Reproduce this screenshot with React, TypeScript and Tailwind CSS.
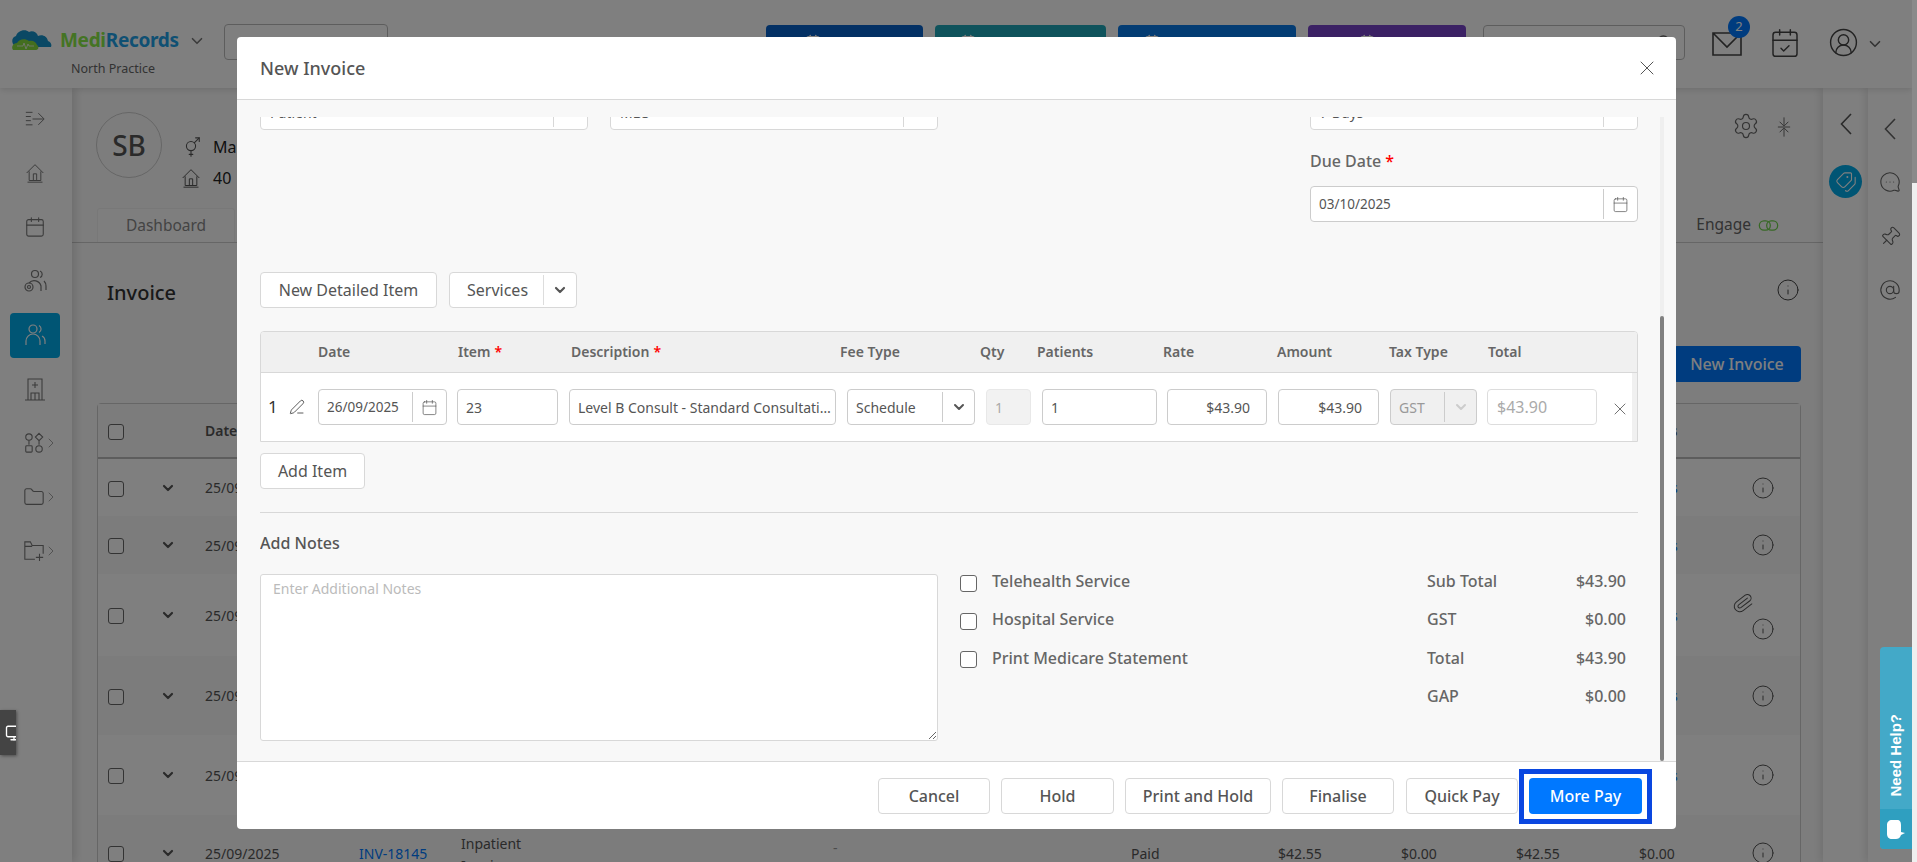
import {
  AtSign,
  Calendar,
  CalendarCheck,
  ChevronDown,
  ChevronRight,
  CircleUserRound,
  Folder,
  Info,
  MessageCircleMore,
  Monitor,
  Paperclip,
  PenLine,
  Pin,
  Search,
  Settings,
  Tags,
  VenusAndMars,
  X,
} from 'lucide-react'

function HomeIcon({ className = 'size-[20px]' }: { className?: string }) {
  return (
    <svg viewBox="0 0 24 24" fill="none" stroke="currentColor" strokeWidth="1.2" className={className}>
      <path d="M2 12 12 2l10 10M5 10v11h14V10M10 21v-8h4v8M3 23h18" />
    </svg>
  )
}

function PeopleIcon({ className = 'size-[24px]' }: { className?: string }) {
  return (
    <svg viewBox="0 0 24 24" fill="none" stroke="currentColor" strokeWidth="1.2" className={className}>
      <circle cx="10" cy="6" r="4" />
      <path d="M16 2.5a4 4 0 0 1 0 7M3 22v-4a7 7 0 0 1 14 0v4M19 13c2 1 3 3 3 5v3" />
    </svg>
  )
}

function CarerIcon() {
  return (
    <svg viewBox="0 0 24 24" fill="none" stroke="currentColor" strokeWidth="1.2" className="size-[24px]">
      <circle cx="12" cy="5" r="3.5" />
      <path d="M17 2a3.5 3.5 0 0 1 0 6.5M6 14a7 7 0 0 1 12 3v5M21 12c1 1 2 3 2 5v4" />
      <circle cx="6" cy="18" r="4" />
      <circle cx="6" cy="18" r="1.5" />
    </svg>
  )
}

function HospitalIcon() {
  return (
    <svg viewBox="0 0 24 24" fill="none" stroke="currentColor" strokeWidth="1.1" className="size-[24px]">
      <path d="M5 23V2h14v21M2 23h20M12 5v6M9 8h6M8 23v-7h8v7M12 16v7" />
    </svg>
  )
}

function ModulesIcon() {
  return (
    <svg viewBox="0 0 24 24" fill="none" stroke="currentColor" strokeWidth="1.2" className="size-[22px]">
      <circle cx="6.5" cy="5.5" r="3.5" />
      <path d="m17.5 1.5 4 4-4 4-4-4zM6.5 9v5M17.5 9.5V14" />
      <rect x="3" y="15" width="7" height="7" rx="1" />
      <circle cx="17.5" cy="18.5" r="3.5" />
    </svg>
  )
}

function FolderAddIcon() {
  return (
    <svg viewBox="0 0 24 24" fill="none" stroke="currentColor" strokeWidth="1.2" className="size-[22px]">
      <path d="M13 21H2V2h6l2 4h12v9M2 7h8M18 15v8M14 19h8" />
    </svg>
  )
}

function MailIcon() {
  return (
    <svg viewBox="0 0 30 24" fill="none" stroke="currentColor" strokeWidth="1.6" className="h-[24px] w-[30px]">
      <path d="M1 1h28v22H1zM1 1l14 14L29 1" />
    </svg>
  )
}

function ExpandIcon() {
  return (
    <svg viewBox="0 0 24 20" fill="none" stroke="currentColor" strokeWidth="1.2" className="h-[18px] w-[20px]">
      <path d="M1 2h8M1 7h6M1 12h6M1 17h8M9 10h13M16 3l7 7-7 7" />
    </svg>
  )
}

function CompressIcon() {
  return (
    <svg viewBox="0 0 16 24" fill="none" stroke="currentColor" strokeWidth="1.1" className="h-[22px] w-[14px]">
      <path d="M8 1v9M3 6l5 5 5-5M1 12h14M8 23v-9M3 18l5-5 5 5" />
    </svg>
  )
}

function LinkIcon() {
  return (
    <svg viewBox="0 0 22 12" fill="none" stroke="#6fd14b" strokeWidth="1.4" className="h-[11px] w-[21px]">
      <rect x="1" y="1" width="12" height="10" rx="5" />
      <rect x="9" y="1" width="12" height="10" rx="5" />
    </svg>
  )
}

function BigChevronLeft() {
  return (
    <svg viewBox="0 0 12 22" fill="none" stroke="currentColor" strokeWidth="1.6" className="h-[22px] w-[12px]">
      <path d="M11 1 1.5 11l9.5 10" />
    </svg>
  )
}

function Logo() {
  return (
    <svg viewBox="0 0 41 22" className="h-[22px] w-[41px]">
      <path d="M3 16c-3-3-2-8 2-9 1-5 9-8 13-4 3-2 8 0 9 4 4-2 9 0 10 5 3 1 4 4 3 6H6c-1 0-2-1-3-2z" fill="#1590c8" />
      <path d="M2 21c-2-3 0-7 4-7 2-4 8-5 12-2 4-1 7 1 8 4 2 1 2 5-1 5z" fill="#86dc3e" />
      <path d="M6 17h6l1-3 2 6 2-5 1 2h5" fill="none" stroke="#f2f2f2" strokeWidth="0.8" />
    </svg>
  )
}

const sideItems = [
  <ExpandIcon key="expand" />,
  <HomeIcon key="home" />,
  <Calendar key="calendar" size={22} strokeWidth={1.2} />,
  <CarerIcon key="carer" />,
]

const sideItemsBottom = [<ModulesIcon key="modules" />, <Folder key="folder" size={22} strokeWidth={1.2} />, <FolderAddIcon key="add" />]

function Sidebar() {
  return (
    <aside className="z-10 flex w-[72px] shrink-0 flex-col bg-white pt-[4px] pl-[10px] text-[#777] shadow-[4px_0_8px_rgba(0,0,0,0.12)]">
      {sideItems.map((icon, i) => (
        <div key={i} className="flex h-[54px] w-[50px] items-center justify-center">
          {icon}
        </div>
      ))}
      <div className="flex h-[54px] w-[50px] items-center justify-center">
        <div className="flex h-[45px] w-[50px] items-center justify-center rounded-[4px] bg-[#00aae8] text-white">
          <PeopleIcon />
        </div>
      </div>
      <div className="flex h-[54px] w-[50px] items-center justify-center">
        <HospitalIcon />
      </div>
      {sideItemsBottom.map((icon, i) => (
        <div key={i} className="relative flex h-[54px] w-[50px] items-center justify-center">
          <span className="-ml-[2px] flex">{icon}</span>
          <ChevronRight size={16} strokeWidth={1} className="absolute left-[33px] text-[#777]" />
        </div>
      ))}
    </aside>
  )
}

function TopBar() {
  return (
    <header className="z-20 flex h-[88px] shrink-0 bg-white shadow-[0_2px_6px_rgba(0,0,0,0.12)]">
      <div className="flex w-[224px] shrink-0 flex-col pl-[11px] pt-[28px]">
        <div className="flex h-[24px] items-center">
          <Logo />
          <span className="ml-[8px] text-[19px] leading-[24px] font-bold tracking-[-0.3px]">
            <span className="text-[#88e848]">Medi</span>
            <span className="text-[#1ea0e6]">Records</span>
          </span>
          <ChevronDown size={18} strokeWidth={2.2} className="ml-[9px] mt-[2px] text-[#777]" />
        </div>
        <p className="mt-[8px] pl-[60px] text-[12.5px] leading-[18px] text-[#666]">North Practice</p>
      </div>
      <div className="mt-[24px] flex h-[36px] w-[164px] justify-end rounded-[4px] border border-[#bbb] pr-[28px] pt-[9px] text-[#666]">
        <ChevronDown size={12} />
      </div>
      <div className="ml-[378px] flex h-[40px] gap-[12px] pt-[25px]">
        <div className="h-[40px] w-[157px] rounded-[4px] bg-[#0661c8] pl-[39px] pt-[9px] text-white">
          <Calendar size={16} />
        </div>
        <div className="h-[40px] w-[171px] rounded-[4px] bg-[#1fa7b8] pl-[25px] pt-[9px] text-white">
          <Calendar size={16} />
        </div>
        <div className="h-[40px] w-[178px] rounded-[4px] bg-[#0678e6] pl-[26px] pt-[9px] text-white">
          <Calendar size={16} />
        </div>
        <div className="h-[40px] w-[158px] rounded-[4px] bg-[#7642c8] pl-[51px] pt-[9px] text-white">
          <Calendar size={16} />
        </div>
      </div>
      <div className="ml-[17px] mt-[25px] flex h-[35px] w-[202px] justify-end rounded-[4px] border border-[#bbb] pr-[12px] pt-[8px] text-[#666]">
        <Search size={16} />
      </div>
      <div className="relative ml-[27px] mt-[32px] h-[24px] text-[#444]">
        <MailIcon />
        <span className="absolute -top-[16px] left-[16px] flex size-[22px] items-center justify-center rounded-full bg-[#0078ff] text-[13px] text-white">
          2
        </span>
      </div>
      <CalendarCheck size={32} strokeWidth={1.1} className="ml-[27px] mt-[27px] text-[#444]" />
      <CircleUserRound size={31} strokeWidth={1.1} className="ml-[27px] mt-[27px] text-[#444]" />
      <ChevronDown size={18} strokeWidth={2.2} className="ml-[7px] mt-[35px] text-[#666]" />
    </header>
  )
}

const rows = [
  { h: 'h-[57px]', stripe: 'bg-white' },
  { h: 'h-[58px]', stripe: 'bg-[#f8f8f8]' },
  { h: 'h-[82px]', stripe: 'bg-white', clip: true },
  { h: 'h-[79px]', stripe: 'bg-[#f8f8f8]' },
  { h: 'h-[80px]', stripe: 'bg-white' },
]

const listCols = 'grid grid-cols-[56px_51px_154px_102px_372px_298px_147px_123px_115px_123px_104px_40px_1fr] items-center text-[14px] text-[#555]'

function ListRow({ h, stripe, clip }: { h: string; stripe: string; clip?: boolean }) {
  return (
    <div className={`${listCols} ${h} ${stripe}`}>
      <div className="pl-[10px] pt-[2px]">
        <span className="block size-[16px] rounded-[3px] border border-[#666] bg-white" />
      </div>
      <ChevronDown size={16} strokeWidth={3.2} className="ml-[6px] text-[#555]" />
      <span>25/09/2025</span>
      <span className="text-[#0078ff]">INV-18144</span>
      <span>Invoice</span>
      <span>-</span>
      <span>Paid</span>
      <span>$42.55</span>
      <span>$0.00</span>
      <span>$42.55</span>
      <span className="-ml-[5px] text-[#0078ff]">Claims</span>
      <div className={`relative flex justify-center ${clip ? 'mt-[28px]' : ''}`}>
        <Info size={24} strokeWidth={1} />
        {clip && <Paperclip size={22} strokeWidth={1.1} className="absolute -left-[11px] -top-[25px] rotate-[8deg]" />}
      </div>
    </div>
  )
}

function InvoiceList() {
  return (
    <div className="ml-[25px] mr-[22px] mt-[21px] rounded-t-[4px] border border-[#ccc] bg-[#fafafa]">
      <div className={`${listCols} h-[55px] border-b-2 border-[#bbb] bg-[#f8f8f8]`}>
        <div className="pl-[10px] pt-[2px]">
          <span className="block size-[16px] rounded-[3px] border border-[#666] bg-white" />
        </div>
        <span />
        <span className="font-semibold">Date</span>
        <span className="col-start-11 -ml-[7px] font-semibold">Claims</span>
      </div>
      {rows.map((r, i) => (
        <ListRow key={i} {...r} />
      ))}
      <div className={`${listCols} h-[76px] bg-[#f8f8f8]`}>
        <div className="pl-[10px] pt-[2px]">
          <span className="block size-[16px] rounded-[3px] border border-[#666] bg-white" />
        </div>
        <ChevronDown size={16} strokeWidth={3.2} className="ml-[6px] text-[#555]" />
        <span>25/09/2025</span>
        <span className="text-[#0078ff]">INV-18145</span>
        <span className="mt-[3px] leading-[22px]">
          Inpatient
          <br />
          Invoice
        </span>
        <span className="-mt-[12px] text-[#999]">-</span>
        <span>Paid</span>
        <span>$42.55</span>
        <span>$0.00</span>
        <span>$42.55</span>
        <span>$0.00</span>
        <div className="flex justify-center">
          <Info size={24} strokeWidth={1} />
        </div>
      </div>
    </div>
  )
}

function MainArea() {
  return (
    <main className="min-w-0 flex-1 bg-[#fbfbfb]">
      <div className="flex h-[120px] pl-[24px] pt-[24px]">
        <div className="flex size-[66px] items-center justify-center rounded-full border border-[#ccc] text-[28px] font-medium text-[#555]">
          SB
        </div>
        <div className="ml-[18px] flex flex-col gap-[9px] pt-[24px] text-[16px] text-[#222]">
          <div className="flex items-center gap-[11px] leading-[22px]">
            <VenusAndMars size={22} strokeWidth={1.2} className="text-[#555]" />
            <span>Male</span>
          </div>
          <div className="flex items-center gap-[12px] pl-[1px] leading-[22px]">
            <HomeIcon className="size-[20px] text-[#555]" />
            <span>40</span>
          </div>
        </div>
        <div className="ml-auto flex gap-[17px] pr-[32px] text-[#666]">
          <Settings size={28} strokeWidth={1} />
          <span className="mt-[4px]">
            <CompressIcon />
          </span>
        </div>
      </div>
      <div className="flex h-[35px] border-b border-[#ccc] pl-[25px] text-[15.5px]">
        <div className="flex w-[138px] items-center justify-center rounded-t-[3px] border-x border-t border-[#f0f0f0] bg-[#fdfdfd] text-[#888]">
          Dashboard
        </div>
        <div className="ml-auto flex items-center gap-[7px] pr-[44px] text-[#666]">
          Engage
          <LinkIcon />
        </div>
      </div>
      <div className="flex h-[103px] pl-[35px] pr-[23px] pt-[35px]">
        <h1 className="text-[20px] leading-[30px] font-medium text-[#333]">Invoice</h1>
        <Info size={24} strokeWidth={1} className="ml-auto text-[#444]" />
      </div>
      <div className="flex justify-end pr-[22px]">
        <div className="flex h-[36px] w-[128px] items-center justify-center rounded-[4px] bg-[#0078ff] text-[16px] font-medium text-white">
          New Invoice
        </div>
      </div>
      <InvoiceList />
    </main>
  )
}

function RightPanels() {
  return (
    <>
      <aside className="z-10 flex w-[45px] shrink-0 flex-col items-center bg-white pt-[25px] text-[#555] shadow-[-3px_0_8px_rgba(0,0,0,0.1)]">
        <BigChevronLeft />
        <div className="mt-[30px] flex size-[33px] items-center justify-center rounded-full bg-[#00aae8] text-white">
          <Tags size={22} strokeWidth={1.2} className="-scale-x-100" />
        </div>
      </aside>
      <aside className="z-10 flex w-[44px] shrink-0 flex-col items-center bg-white pt-[30px] text-[#666] shadow-[-3px_0_8px_rgba(0,0,0,0.1)]">
        <BigChevronLeft />
        <MessageCircleMore size={22} strokeWidth={1.2} className="mt-[31px] -scale-x-100" />
        <Pin size={22} strokeWidth={1.2} className="mt-[33px] rotate-45" />
        <AtSign size={22} strokeWidth={1.2} className="mt-[31px]" />
      </aside>
    </>
  )
}

function Req() {
  return <span className="ml-[4px] text-[#ff0000]">*</span>
}

function SelectStub({ text }: { text: string }) {
  return (
    <div className="relative h-[36px] w-[328px] rounded-[4px] border border-[#d8d8d8] bg-white pl-[9px] text-[14px] leading-[36px] text-[#555]">
      {text}
      <span className="absolute bottom-[2px] right-[33px] top-[2px] w-px bg-[#d8d8d8]" />
    </div>
  )
}

const inputBase = 'flex h-[36px] items-center rounded-[4px] border border-[#ccc] bg-white text-[14px] text-[#555]'

function AddonIcon({ children, w = 'w-[34px]' }: { children: React.ReactNode; w?: string }) {
  return <span className={`ml-auto flex h-[30px] shrink-0 ${w} items-center justify-center border-l border-[#ccc]`}>{children}</span>
}

function LineTable() {
  return (
    <div className="mt-[23px] overflow-hidden rounded-t-[4px] border border-[#d8d8d8] bg-white">
      <div className="grid h-[41px] grid-cols-[57px_140px_113px_269px_140px_57px_126px_114px_112px_99px_1fr] items-center border-b border-[#d8d8d8] bg-[#f0f0f0] pb-[2px] text-[14px] font-semibold text-[#666]">
        <span />
        <span>Date</span>
        <span>
          Item
          <Req />
        </span>
        <span>
          Description
          <Req />
        </span>
        <span>Fee Type</span>
        <span>Qty</span>
        <span>Patients</span>
        <span>Rate</span>
        <span>Amount</span>
        <span>Tax Type</span>
        <span>Total</span>
      </div>
      <div className="flex h-[68px]">
        <div className="grid flex-1 grid-cols-[57px_139px_112px_278px_139px_56px_125px_111px_112px_97px_121px_1fr] items-center">
          <div className="flex items-center pl-[7px] text-[#333]">
            <span className="w-[21px] text-[17px] leading-[20px]">1</span>
            <PenLine size={16} strokeWidth={1.2} />
          </div>
          <div className={`${inputBase} w-[129px] pl-[8px] !text-[13.5px]`}>
            26/09/2025
            <AddonIcon>
              <Calendar size={17} strokeWidth={1} />
            </AddonIcon>
          </div>
          <div className={`${inputBase} w-[101px] pl-[8px]`}>23</div>
          <div className={`${inputBase} w-[267px] pl-[8px] pr-[2px]`}>
            <span className="truncate">Level B Consult - Standard Consultation 20 to 40 minutes</span>
          </div>
          <div className={`${inputBase} w-[128px] pl-[8px]`}>
            Schedule
            <AddonIcon w="w-[32px]">
              <ChevronDown size={16} strokeWidth={3} />
            </AddonIcon>
          </div>
          <div className={`${inputBase} w-[45px] !border-[#e8e8e8] !bg-[#f2f2f2] pl-[8px] !text-[#aaa]`}>1</div>
          <div className={`${inputBase} w-[115px] pl-[8px]`}>1</div>
          <div className={`${inputBase} w-[100px] justify-end pr-[16px]`}>$43.90</div>
          <div className={`${inputBase} w-[101px] justify-end pr-[16px]`}>$43.90</div>
          <div className={`${inputBase} w-[87px] !bg-[#f0f0f0] pl-[8px] !text-[#999]`}>
            GST
            <AddonIcon w="w-[32px]">
              <ChevronDown size={16} strokeWidth={3} className="text-[#ccc]" />
            </AddonIcon>
          </div>
          <div className={`${inputBase} w-[110px] !border-[#ddd] pl-[9px] !text-[16px] !text-[#aaa]`}>$43.90</div>
          <X size={20} strokeWidth={1} className="ml-[2px] mt-[4px] text-[#555]" />
        </div>
        <span className="w-[5px] bg-[#f0f0f0]" />
      </div>
    </div>
  )
}

const optionRows = [
  { option: 'Telehealth Service', label: 'Sub Total', value: '$43.90' },
  { option: 'Hospital Service', label: 'GST', value: '$0.00' },
  { option: 'Print Medicare Statement', label: 'Total', value: '$43.90' },
  { option: '', label: 'GAP', value: '$0.00' },
]

function FormBody() {
  return (
    <div className="flex flex-1 bg-[#f8f8f8] pl-[23px] pt-[17px]">
      <div className="h-[644px] w-[1378px] overflow-hidden">
        <div className="-mt-[23px]">
          <div className="flex gap-[22px]">
            <SelectStub text="Patient" />
            <SelectStub text="MBS" />
            <div className="ml-auto">
              <SelectStub text="7 Days" />
            </div>
          </div>
          <div className="ml-[1050px] mt-[20px] w-[328px] text-[16px] leading-[22px] font-medium text-[#666]">
            Due Date
            <Req />
            <div className={`${inputBase} mt-[14px] pl-[8px] !text-[13.5px] font-normal`}>
              03/10/2025
              <AddonIcon>
                <Calendar size={17} strokeWidth={1} />
              </AddonIcon>
            </div>
          </div>
          <div className="mt-[50px] flex gap-[12px] text-[16px] text-[#555]">
            <div className="flex h-[36px] w-[177px] items-center justify-center rounded-[4px] border border-[#d8d8d8] bg-white">
              New Detailed Item
            </div>
            <div className="flex h-[36px] w-[128px] items-center rounded-[4px] border border-[#d8d8d8] bg-white pl-[17px]">
              Services
              <span className="ml-auto flex h-[30px] w-[33px] items-center justify-center border-l border-[#ddd]">
                <ChevronDown size={16} strokeWidth={3.2} />
              </span>
            </div>
          </div>
          <LineTable />
          <div className="mt-[11px] flex h-[36px] w-[105px] items-center justify-center rounded-[4px] border border-[#d8d8d8] bg-white text-[16px] text-[#555]">
            Add Item
          </div>
          <div className="mt-[23px] border-t border-[#d8d8d8]" />
          <h2 className="mt-[19px] text-[16px] leading-[22px] font-medium text-[#555]">Add Notes</h2>
          <div className="mt-[20px] flex">
            <textarea
              placeholder="Enter Additional Notes"
              className="h-[167px] w-[678px] rounded-[3px] border border-[#d8d8d8] bg-white px-[12px] py-[3px] text-[14px] text-[#555] outline-none placeholder:text-[#bbb]"
            />
            <div className="-mt-[4px] ml-[22px] flex h-fit flex-1 flex-col gap-[16.33px] text-[16px] leading-[22px] font-medium text-[#666]">
              {optionRows.map((r) => (
                <div key={r.label} className="flex h-[22px] items-center">
                  <div className="flex w-[467px] items-center">
                    {r.option && (
                      <>
                        <span className="mr-[15px] mt-[4px] block size-[17px] rounded-[3px] border border-[#666] bg-white" />
                        {r.option}
                      </>
                    )}
                  </div>
                  {r.label}
                  <span className="ml-auto pr-[12px]">{r.value}</span>
                </div>
              ))}
            </div>
          </div>
        </div>
      </div>
      <div className="ml-[22px] flex h-[644px] w-[4px] flex-col justify-end bg-[#efefef]">
        <span className="h-[445px] rounded-full bg-[#808080]" />
      </div>
    </div>
  )
}

function FooterButton({ label, w }: { label: string; w: string }) {
  return (
    <div className={`flex h-[36px] items-center justify-center rounded-[4px] border border-[#d8d8d8] bg-white text-[16px] font-medium text-[#555] ${w}`}>
      {label}
    </div>
  )
}

function InvoiceModal() {
  return (
    <div className="absolute left-[237px] top-[37px] z-40 flex h-[792px] w-[1439px] flex-col overflow-hidden rounded-[4px] bg-white">
      <div className="flex h-[63px] shrink-0 items-center justify-between border-b border-[#d8d8d8] pl-[23px] pr-[17px]">
        <h2 className="text-[18px] font-medium text-[#555]">New Invoice</h2>
        <X size={24} strokeWidth={1} className="text-[#555]" />
      </div>
      <FormBody />
      <div className="flex h-[68px] shrink-0 items-center justify-end gap-[11px] border-t border-[#d8d8d8] pr-[34px]">
        <FooterButton label="Cancel" w="w-[112px]" />
        <FooterButton label="Hold" w="w-[113px]" />
        <FooterButton label="Print and Hold" w="w-[146px]" />
        <FooterButton label="Finalise" w="mr-[1px] w-[112px]" />
        <FooterButton label="Quick Pay" w="w-[112px]" />
        <div className="relative flex h-[36px] w-[113px] items-center justify-center rounded-[4px] bg-[#0078ff] text-[16px] font-medium text-white">
          More Pay
          <span className="pointer-events-none absolute -bottom-[10px] -left-[10px] -right-[10px] -top-[9px] border-[5px] border-[#0a47e0]" />
        </div>
      </div>
    </div>
  )
}

function NeedHelp() {
  return (
    <div className="absolute right-0 top-[647px] z-40 flex h-[202px] w-[32px] flex-col overflow-hidden rounded-l-[4px] bg-[#43a9c8] text-white">
      <div className="flex flex-1 items-end justify-center pb-[12px]">
        <span className="rotate-180 text-[15px] font-bold [font-family:'Liberation_Sans',sans-serif] [writing-mode:vertical-rl]">
          Need Help?
        </span>
      </div>
      <div className="flex h-[40px] items-center justify-center bg-[#2f9fc0]">
        <svg viewBox="0 0 18 19" className="h-[19px] w-[18px]" fill="white">
          <path d="M5 0h5c3 0 4 2 4 5v7l4 1-4 2c-1 3-3 4-5 4H5c-3 0-5-2-5-5V5c0-3 2-5 5-5z" />
        </svg>
      </div>
    </div>
  )
}

export default function App() {
  return (
    <div className="flex h-screen w-full overflow-hidden bg-white font-['Noto_Sans',sans-serif]">
      <div className="relative flex h-full w-[1912px] shrink-0 flex-col overflow-hidden">
        <TopBar />
        <div className="flex min-h-0 flex-1">
          <Sidebar />
          <MainArea />
          <RightPanels />
        </div>
        <div className="absolute inset-0 z-30 bg-black/50" />
        <div className="absolute left-0 top-[710px] z-40 flex h-[45px] w-[16px] items-center justify-end overflow-hidden bg-[#444] text-white shadow-[1px_1px_3px_rgba(0,0,0,0.4)]">
          <Monitor size={18} strokeWidth={1.8} className="-mr-[7px] shrink-0" />
        </div>
        <InvoiceModal />
        <NeedHelp />
      </div>
      <div className="flex-1 bg-[#efefef]">
        <div className="h-[183px] bg-[#8a8a8a]" />
      </div>
    </div>
  )
}
